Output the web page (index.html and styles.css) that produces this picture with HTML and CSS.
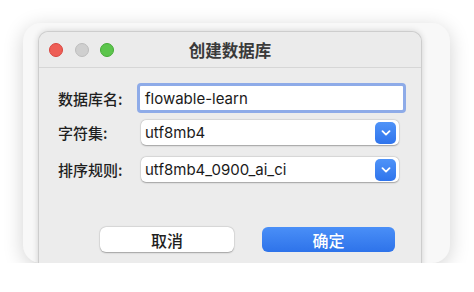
FILE: index.html
```html
<!DOCTYPE html>
<html lang="zh">
<head>
<meta charset="utf-8">
<title>创建数据库</title>
<link rel="stylesheet" href="styles.css">
</head>
<body>
<div class="card">
  <div class="window">
    <div class="titlebar">
      <div class="lights">
        <span class="light red"></span>
        <span class="light gray"></span>
        <span class="light green"></span>
      </div>
      <div class="title">创建数据库</div>
      <div></div>
    </div>
    <div class="content">
      <div class="row row1">
        <label class="label">数据库名:</label>
        <div class="input">flowable-learn</div>
      </div>
      <div class="row row2">
        <label class="label label-sel">字符集:</label>
        <div class="select">
          <span class="value">utf8mb4</span>
          <span class="chev"><svg width="10" height="6" viewBox="0 0 10 6"><path d="M1.5 1.2 L5 4.6 L8.5 1.2" fill="none" stroke="#fff" stroke-width="1.8" stroke-linecap="round" stroke-linejoin="round"/></svg></span>
        </div>
      </div>
      <div class="row row3">
        <label class="label label-sel">排序规则:</label>
        <div class="select">
          <span class="value">utf8mb4_0900_ai_ci</span>
          <span class="chev"><svg width="10" height="6" viewBox="0 0 10 6"><path d="M1.5 1.2 L5 4.6 L8.5 1.2" fill="none" stroke="#fff" stroke-width="1.8" stroke-linecap="round" stroke-linejoin="round"/></svg></span>
        </div>
      </div>
      <div class="buttons">
        <button class="btn cancel">取消</button>
        <button class="btn ok">确定</button>
      </div>
    </div>
  </div>
</div>
</body>
</html>
```
FILE: styles.css
```css
html, body {
  margin: 0;
  padding: 0;
  background: #ffffff;
}
body {
  padding: 23px 0 0 23px;
  font-family: Inter, "Noto Sans CJK SC", sans-serif;
}
.card {
  box-sizing: border-box;
  width: 427px;
  height: 240px;
  padding: 8px 0 0 15px;
  background: #f8f8f8;
  border-radius: 18px;
  box-shadow: 0 4px 20px rgba(0, 0, 0, 0.18);
}
.window {
  box-sizing: border-box;
  width: 384px;
  height: 238px;
  background: #ececec;
  border: 1px solid #cdcdcd;
  border-bottom: none;
  border-radius: 10px 10px 0 0;
  box-shadow: 0 0 6px rgba(0, 0, 0, 0.16);
}
.titlebar {
  height: 35px;
  border-bottom: 1px solid #d6d6d6;
  display: grid;
  grid-template-columns: 1fr auto 1fr;
  align-items: center;
  border-radius: 10px 10px 0 0;
  background: #ebebeb;
}
.lights {
  display: flex;
  gap: 11.5px;
  padding-left: 10px;
}
.light {
  width: 14px;
  height: 14px;
  border-radius: 50%;
  box-sizing: border-box;
}
.red { background: #ee5e56; border: 0.5px solid #d9463f; }
.gray { background: #cfcfcf; border: 0.5px solid #bdbdbd; }
.green { background: #5cc54c; border: 0.5px solid #45ab37; }
.title {
  font-family: "Noto Sans CJK SC", sans-serif;
  font-size: 16.5px;
  font-weight: 700;
  color: #3a3a3a;
}
.content {
  padding: 15px 0 0 19px;
}
.row {
  display: flex;
  align-items: center;
}
.row1 { height: 30px; }
.row2 { height: 25px; margin-top: 7px; }
.row3 { height: 25px; margin-top: 12px; }
.label {
  width: 79px;
  flex: none;
  font-family: "Noto Sans CJK SC", sans-serif;
  font-size: 15px;
  font-weight: 500;
  color: #1f1f1f;
}
.label-sel { width: 83px; }
.input {
  box-sizing: border-box;
  width: 269px;
  height: 30px;
  border: 3px solid #8eabe8;
  border-radius: 4px;
  background: #ffffff;
  padding-left: 5px;
  font-size: 15px;
  color: #1a1a1a;
  display: flex;
  align-items: center;
}
.select {
  box-sizing: border-box;
  width: 258px;
  height: 25px;
  background: #ffffff;
  border-radius: 5px;
  box-shadow: 0 0.5px 1.5px rgba(0, 0, 0, 0.3), 0 0 0 0.5px rgba(0, 0, 0, 0.06);
  display: flex;
  align-items: center;
  justify-content: space-between;
  padding: 0 3px 0 4px;
}
.value {
  font-size: 15px;
  color: #1a1a1a;
}
.chev {
  width: 21px;
  height: 22px;
  border-radius: 5px;
  background: linear-gradient(#4f93f8, #2f74ec);
  display: flex;
  align-items: center;
  justify-content: center;
}
.buttons {
  display: flex;
  gap: 28px;
  margin: 45px 0 0 42px;
}
.btn {
  box-sizing: border-box;
  height: 25px;
  border: none;
  border-radius: 6px;
  font-family: "Noto Sans CJK SC", sans-serif;
  font-size: 16px;
  font-weight: 500;
  padding: 0;
  display: flex;
  align-items: center;
  justify-content: center;
}
.cancel {
  width: 134px;
  background: #ffffff;
  color: #1f1f1f;
  box-shadow: 0 0.5px 1.5px rgba(0, 0, 0, 0.3), 0 0 0 0.5px rgba(0, 0, 0, 0.06);
}
.ok {
  width: 133px;
  background: linear-gradient(#4a8ff7, #2e73ea);
  color: #ffffff;
}
```
